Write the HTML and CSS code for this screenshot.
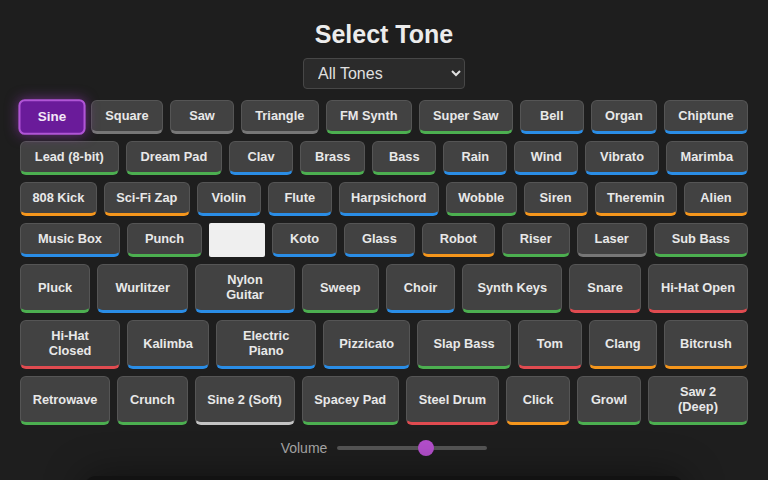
FILE: index.html
```html
<!DOCTYPE html>
<html lang="en">
<head>
<meta charset="utf-8">
<title>Select Tone</title>
<link rel="stylesheet" href="styles.css">
</head>
<body>
<div class="app">
  <h1 class="title">Select Tone</h1>
  <select class="filter">
    <option>All Tones</option>
    <option>Synth</option>
    <option>Instruments</option>
    <option>Percussion</option>
    <option>Effects</option>
  </select>

  <div class="tones">
    <div class="row">
      <button class="tone active">Sine</button>
      <button class="tone">Square</button>
      <button class="tone">Saw</button>
      <button class="tone">Triangle</button>
      <button class="tone c-green">FM Synth</button>
      <button class="tone c-green">Super Saw</button>
      <button class="tone c-blue">Bell</button>
      <button class="tone c-blue">Organ</button>
      <button class="tone c-blue">Chiptune</button>
    </div>
    <div class="row">
      <button class="tone c-green">Lead (8-bit)</button>
      <button class="tone c-green">Dream Pad</button>
      <button class="tone c-blue">Clav</button>
      <button class="tone c-green">Brass</button>
      <button class="tone c-green">Bass</button>
      <button class="tone c-blue">Rain</button>
      <button class="tone c-blue">Wind</button>
      <button class="tone c-blue">Vibrato</button>
      <button class="tone c-blue">Marimba</button>
    </div>
    <div class="row">
      <button class="tone c-orange">808 Kick</button>
      <button class="tone c-orange">Sci-Fi Zap</button>
      <button class="tone c-blue">Violin</button>
      <button class="tone c-blue">Flute</button>
      <button class="tone c-blue">Harpsichord</button>
      <button class="tone c-green">Wobble</button>
      <button class="tone c-orange">Siren</button>
      <button class="tone c-orange">Theremin</button>
      <button class="tone c-orange">Alien</button>
    </div>
    <div class="row">
      <button class="tone c-blue">Music Box</button>
      <button class="tone c-green">Punch</button>
      <button class="blank" aria-label="Untitled tone"></button>
      <button class="tone c-blue">Koto</button>
      <button class="tone c-blue">Glass</button>
      <button class="tone c-orange">Robot</button>
      <button class="tone c-green">Riser</button>
      <button class="tone">Laser</button>
      <button class="tone c-green">Sub Bass</button>
    </div>
    <div class="row">
      <button class="tone c-green">Pluck</button>
      <button class="tone c-blue">Wurlitzer</button>
      <button class="tone c-blue">Nylon Guitar</button>
      <button class="tone c-green">Sweep</button>
      <button class="tone c-blue">Choir</button>
      <button class="tone c-green">Synth Keys</button>
      <button class="tone c-red">Snare</button>
      <button class="tone c-red">Hi-Hat Open</button>
    </div>
    <div class="row">
      <button class="tone c-red">Hi-Hat Closed</button>
      <button class="tone c-blue">Kalimba</button>
      <button class="tone c-blue">Electric Piano</button>
      <button class="tone c-blue">Pizzicato</button>
      <button class="tone c-green">Slap Bass</button>
      <button class="tone c-red">Tom</button>
      <button class="tone c-orange">Clang</button>
      <button class="tone c-orange">Bitcrush</button>
    </div>
    <div class="row">
      <button class="tone c-green">Retrowave</button>
      <button class="tone c-green">Crunch</button>
      <button class="tone c-light">Sine 2 (Soft)</button>
      <button class="tone c-green">Spacey Pad</button>
      <button class="tone c-red">Steel Drum</button>
      <button class="tone c-orange">Click</button>
      <button class="tone c-green">Growl</button>
      <button class="tone c-green">Saw 2 (Deep)</button>
    </div>
  </div>

  <div class="volume">
    <label class="volume-label" for="vol">Volume</label>
    <input id="vol" class="volume-slider" type="range" min="0" max="100" value="60">
  </div>

  <div class="panel"></div>
</div>
</body>
</html>
```

FILE: styles.css
```css
:root {
  color-scheme: dark;
}

html, body {
  margin: 0;
  padding: 0;
  background: #1e1e1e;
}

body {
  font-family: "Liberation Sans", Arial, sans-serif;
  color: #e6e6e6;
}

.app {
  height: 100vh;
  overflow: hidden;
  box-sizing: border-box;
  padding: 20px 20px 0;
  display: flex;
  flex-direction: column;
  align-items: center;
}

.app > * {
  flex-shrink: 0;
}

.title {
  margin: 0;
  font-size: 25px;
  line-height: 28px;
  font-weight: bold;
  color: #ececec;
}

.filter {
  margin-top: 10px;
  width: 162px;
  height: 31px;
  box-sizing: border-box;
  padding: 0 10px;
  background-color: #2b2b2b;
  color: #e0e0e0;
  border: 1px solid #474747;
  border-radius: 4px;
  font-family: "Liberation Sans", Arial, sans-serif;
  font-size: 16px;
}

.tones {
  align-self: stretch;
  margin-top: 11px;
  display: flex;
  flex-direction: column;
  gap: 7px;
}

.row {
  display: flex;
  gap: 7px;
}

.tone {
  flex: 1 1 auto;
  min-width: 64px;
  max-width: 100px;
  box-sizing: border-box;
  padding: 7px 11px 8px;
  border: 1px solid #555;
  border-bottom: 3px solid #777;
  border-radius: 6px;
  background: #424242;
  color: #e8e8e8;
  font-family: "Liberation Sans", Arial, sans-serif;
  font-size: 12.8px;
  line-height: 15px;
  font-weight: bold;
  text-align: center;
  cursor: pointer;
}

.c-green { border-bottom-color: #4caf50; }
.c-blue { border-bottom-color: #2a8de6; }
.c-orange { border-bottom-color: #f5961c; }
.c-red { border-bottom-color: #e04b50; }
.c-light { border-bottom-color: #c4c4c4; }

.tone.active {
  background: #6a1b9a;
  border: 2px solid #b055d6;
  color: #f3e8f8;
  transform: scale(1.05);
  box-shadow: 0 0 12px rgba(170, 60, 210, 0.55);
}

.blank {
  flex: 0 0 56px;
  box-sizing: border-box;
  padding: 0;
  border: none;
  border-radius: 2px;
  background: #efefef;
}

.volume {
  margin-top: 13px;
  height: 20px;
  display: flex;
  align-items: center;
  gap: 10px;
}

.volume-label {
  font-size: 14px;
  color: #a8a8a8;
}

.volume-slider {
  -webkit-appearance: none;
  appearance: none;
  width: 150px;
  height: 4px;
  margin: 0;
  border-radius: 2px;
  background: #555;
  outline: none;
}

.volume-slider::-webkit-slider-thumb {
  -webkit-appearance: none;
  appearance: none;
  width: 16px;
  height: 16px;
  border-radius: 50%;
  background: #b44fcc;
  border: none;
}

.panel {
  margin-top: 18px;
  width: 600px;
  height: 200px;
  border-radius: 12px;
  background: #121212;
  box-shadow: 0 0 40px rgba(0, 0, 0, 0.45);
}
```
